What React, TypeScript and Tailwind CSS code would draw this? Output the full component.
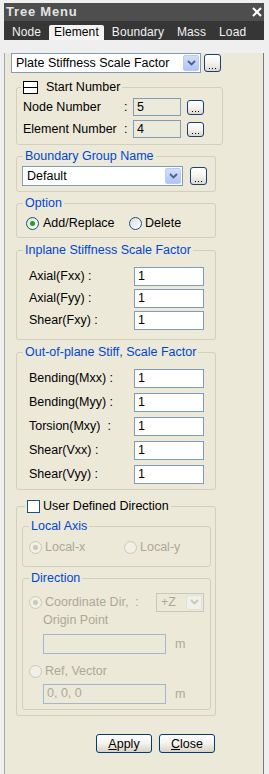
import React from 'react';

type FieldKind = 'normal' | 'readonly' | 'disabled';

function DotsButton({ h = 'h-[18px]' }: { h?: string }) {
  return (
    <button
      className={`w-[17px] ${h} shrink-0 rounded-[3px] border border-[#1c3f74] bg-linear-to-b from-white via-[#f4f3ee] to-[#dcd8cc] flex items-end justify-center pb-[2px]`}
    >
      <span className="flex gap-[2px]">
        <span className="w-[1px] h-[1px] bg-black" />
        <span className="w-[1px] h-[1px] bg-black" />
        <span className="w-[1px] h-[1px] bg-black" />
      </span>
    </button>
  );
}

function Chevron({ color }: { color: string }) {
  return (
    <svg width="9" height="6" viewBox="0 0 9 6">
      <polyline points="1,1 4.5,4.5 8,1" fill="none" stroke={color} strokeWidth="1.8" />
    </svg>
  );
}

function Combo({ value, className, disabled }: { value: string; className: string; disabled?: boolean }) {
  return (
    <div
      className={`${className} flex items-center border ${
        disabled ? 'border-[#c9c7ba] bg-[#ece9d8] text-[#aca899]' : 'border-[#7f9db9] bg-white text-black'
      }`}
    >
      <span className="flex-1 pl-[4px] leading-[14px] whitespace-nowrap overflow-hidden">{value}</span>
      <span
        className={`w-[16px] h-[calc(100%-2px)] mr-[1px] rounded-[2px] border flex items-center justify-center ${
          disabled
            ? 'border-[#e3e1d6] bg-[#f1f0ea]'
            : 'border-[#b9cbf3] bg-linear-to-b from-[#d2defb] to-[#b0c4f5]'
        }`}
      >
        <Chevron color={disabled ? '#c9c7ba' : '#4d6185'} />
      </span>
    </div>
  );
}

function Field({ value = '', className, kind = 'normal' }: { value?: string; className: string; kind?: FieldKind }) {
  const look =
    kind === 'normal'
      ? 'border-[#7f9db9] bg-white text-black'
      : kind === 'readonly'
      ? 'border-[#7f9db9] bg-[#ebeadb] text-black'
      : 'border-[#a5b6cf] bg-[#ece9d8] text-[#aca899]';
  return (
    <div className={`${className} shrink-0 border ${look} pl-[3px] pt-[1px] leading-[14px] whitespace-nowrap`}>
      {value}
    </div>
  );
}

function Radio({ checked, disabled }: { checked?: boolean; disabled?: boolean }) {
  return (
    <span
      className={`w-[13px] h-[13px] shrink-0 rounded-full border flex items-center justify-center ${
        disabled ? 'border-[#cac8bb] bg-[#f0efe8]' : 'border-[#1c5180] bg-linear-to-br from-[#dcdcd7] to-white'
      }`}
    >
      {checked && (
        <span className={`w-[5px] h-[5px] rounded-full ${disabled ? 'bg-[#cac8bb]' : 'bg-[#21a121]'}`} />
      )}
    </span>
  );
}

function Group({
  title,
  className,
  legendClass = 'ml-[6px]',
  children,
}: {
  title: React.ReactNode;
  className: string;
  legendClass?: string;
  children: React.ReactNode;
}) {
  return (
    <fieldset className={`${className} border border-[#d0d0bf] rounded-[3px]`}>
      <legend className={`${legendClass} px-[2px] leading-[14px] text-[#0046d5]`}>{title}</legend>
      {children}
    </fieldset>
  );
}

const inplane = ['Axial(Fxx) :', 'Axial(Fyy) :', 'Shear(Fxy) :'];
const outplane = ['Bending(Mxx) :', 'Bending(Myy) :', 'Torsion(Mxy)  :', 'Shear(Vxx) :', 'Shear(Vyy) :'];

export default function App() {
  return (
    <div className="w-[269px] h-[774px] bg-[#efefef] pt-[3px] pl-[4px] pr-[5px] font-['Liberation_Sans',Arial,sans-serif] text-[12.5px] text-black select-none">
      {/* Title bar */}
      <div className="h-[18px] bg-[#4e4e4e] flex items-center justify-between pl-[2px] pr-[2px]">
        <span className="text-[13px] font-bold text-[#e4e4e4] leading-[14px] tracking-[0.8px]">Tree Menu</span>
        <svg width="10" height="10" viewBox="0 0 10 10">
          <path d="M1 1 L9 9 M9 1 L1 9" stroke="#ffffff" strokeWidth="2" />
        </svg>
      </div>

      {/* Tabs */}
      <div className="h-[19px] bg-[#363636] flex items-end pl-[3px] gap-[3px] text-[12px]">
        {['Node', 'Element', 'Boundary', 'Mass', 'Load'].map((t) => (
          <div
            key={t}
            className={`h-[15px] px-[5px] leading-[15px] rounded-t-[2px] tracking-[0.1px] ${
              t === 'Element' ? 'bg-[#f4f4f4] text-black' : 'text-[#f2f2f2]'
            }`}
          >
            {t}
          </div>
        ))}
      </div>

      {/* Content */}
      <div className="h-[729px] bg-[#ece9d8] border-l border-r border-b border-l-[#a8a8a8] border-r-[#7a7a7a] border-b-[#8a8a8a]">
        {/* Type selector */}
        <div className="mt-[13px] ml-[6px] flex items-center gap-[3px]">
          <Combo value="Plate Stiffness Scale Factor" className="w-[190px] h-[20px]" />
          <DotsButton />
        </div>

        {/* Start Number */}
        <fieldset className="mt-[7px] ml-[11px] w-[207px] border border-[#d0d0bf] rounded-[3px]">
          <legend className="ml-[4px] px-[2px] leading-[14px] flex items-center gap-[8px]">
            <span className="w-[15px] h-[13px] border border-black bg-white flex items-center">
              <span className="w-full h-[1px] bg-black" />
            </span>
            <span>Start Number</span>
          </legend>
          <div className="pt-[4px] pb-[6px] pl-[6px] flex flex-col gap-[4px]">
            {[
              ['Node Number', '5'],
              ['Element Number', '4'],
            ].map(([label, v]) => (
              <div key={label} className="h-[18px] flex items-center">
                <span className="w-[101px] whitespace-nowrap">{label}</span>
                <span className="w-[9px]">:</span>
                <Field value={v} kind="readonly" className="w-[48px] h-[18px]" />
                <span className="ml-[6px]">
                  <DotsButton h="h-[15px]" />
                </span>
              </div>
            ))}
          </div>
        </fieldset>

        {/* Boundary Group Name */}
        <Group title="Boundary Group Name" className="mt-[4px] ml-[11px] w-[200px]">
          <div className="pt-[3px] pb-[5px] pl-[5px] flex items-center gap-[7px]">
            <Combo value="Default" className="w-[161px] h-[20px]" />
            <DotsButton />
          </div>
        </Group>

        {/* Option */}
        <Group title="Option" className="mt-[4px] ml-[11px] w-[200px]">
          <div className="pt-[6px] pb-[7px] pl-[9px] h-[27px] flex items-center">
            <span className="w-[103px] flex items-center gap-[4px]">
              <Radio checked />
              <span className="leading-[14px]">Add/Replace</span>
            </span>
            <span className="flex items-center gap-[3px]">
              <Radio />
              <span className="leading-[14px]">Delete</span>
            </span>
          </div>
        </Group>

        {/* Inplane */}
        <Group title="Inplane Stiffness Scale Factor" className="mt-[5px] ml-[11px] w-[200px]">
          <div className="pt-[10px] pb-[9px] pl-[12px] flex flex-col gap-[3px]">
            {inplane.map((l) => (
              <div key={l} className="h-[19px] flex items-center">
                <span className="w-[105px] whitespace-pre">{l}</span>
                <Field value="1" className="w-[70px] h-[19px]" />
              </div>
            ))}
          </div>
        </Group>

        {/* Out-of-plane */}
        <Group title="Out-of-plane Stiff, Scale Factor" className="mt-[5px] ml-[11px] w-[200px]">
          <div className="pt-[10px] pb-[5px] pl-[12px] flex flex-col gap-[5px]">
            {outplane.map((l) => (
              <div key={l} className="h-[19px] flex items-center">
                <span className="w-[105px] whitespace-pre">{l}</span>
                <Field value="1" className="w-[70px] h-[19px]" />
              </div>
            ))}
          </div>
        </Group>

        {/* User Defined Direction */}
        <fieldset className="mt-[9px] ml-[11px] w-[200px] border border-[#d0d0bf] rounded-[3px]">
          <legend className="ml-[8px] px-[2px] leading-[14px] flex items-center gap-[3px]">
            <span className="w-[13px] h-[13px] border border-[#1c5180] bg-white" />
            <span>User Defined Direction</span>
          </legend>
          <div className="pt-[6px] pb-[5px] pl-[5px]">
            <Group title="Local Axis" className="w-[189px]">
              <div className="pt-[7px] pb-[12px] pl-[6px] flex items-center text-[#aca899]">
                <span className="w-[95px] flex items-center gap-[3px]">
                  <Radio checked disabled />
                  <span className="leading-[14px]">Local-x</span>
                </span>
                <span className="flex items-center gap-[3px]">
                  <Radio disabled />
                  <span className="leading-[14px]">Local-y</span>
                </span>
              </div>
            </Group>

            <Group title="Direction" className="mt-[4px] w-[189px]">
              <div className="pt-[8px] pb-[5px] pl-[6px] text-[#aca899]">
                <div className="h-[18px] flex items-center">
                  <span className="w-[127px] flex items-center gap-[3px]">
                    <Radio checked disabled />
                    <span className="leading-[14px] whitespace-pre">Coordinate Dir,  :</span>
                  </span>
                  <Combo value="+Z" disabled className="w-[48px] h-[19px]" />
                </div>
                <div className="mt-[2px] pl-[14px] leading-[14px]">Origin Point</div>
                <div className="mt-[7px] pl-[14px] flex items-center">
                  <Field kind="disabled" className="w-[123px] h-[20px]" />
                  <span className="ml-[9px]">m</span>
                </div>
                <div className="mt-[10px] h-[14px] flex items-center gap-[3px]">
                  <Radio disabled />
                  <span className="leading-[14px]">Ref, Vector</span>
                </div>
                <div className="mt-[6px] pl-[14px] flex items-center">
                  <Field kind="disabled" value="0, 0, 0" className="w-[123px] h-[20px]" />
                  <span className="ml-[9px]">m</span>
                </div>
              </div>
            </Group>
          </div>
        </fieldset>

        {/* Buttons */}
        <div className="mt-[18px] pl-[91px] flex gap-[7px]">
          {[
            ['A', 'pply'],
            ['C', 'lose'],
          ].map(([k, rest]) => (
            <button
              key={k}
              className="w-[56px] h-[19px] rounded-[3px] border border-[#003c74] bg-linear-to-b from-white via-[#f3f2ec] to-[#d8d3c6] leading-[14px] text-black"
            >
              <span className="underline">{k}</span>
              {rest}
            </button>
          ))}
        </div>
      </div>
    </div>
  );
}
